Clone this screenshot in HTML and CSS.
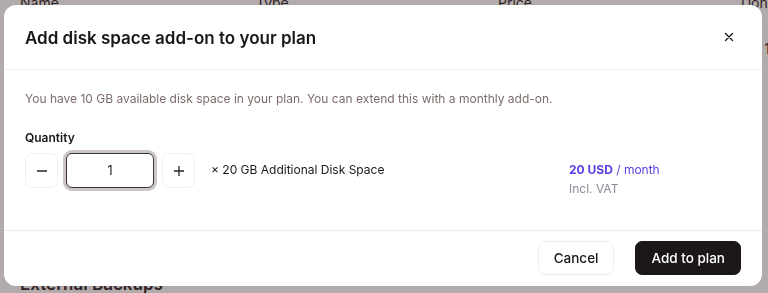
FILE: index.html
```html
<!DOCTYPE html>
<html lang="en">

<head>
    <meta charset="UTF-8">
    <meta name="viewport" content="width=device-width, initial-scale=1.0">
    <title>Disk space add-on</title>
    <link rel="stylesheet" href="styles.css">
</head>

<body>
    <div class="page">
        <div class="table-head">
            <span>Name</span>
            <span>Type</span>
            <span>Price</span>
            <span>Done</span>
        </div>
        <div class="table-row"><span class="row-num">1</span></div>
        <h3 class="section-title">External Backups</h3>
    </div>

    <div class="overlay">
        <div class="modal">
            <header class="modal-header">
                <h2>Add disk space add-on to your plan</h2>
                <button class="close" aria-label="Close">
                    <svg width="10" height="10" viewBox="0 0 10 10">
                        <path d="M1.5 1.5 L8.5 8.5 M8.5 1.5 L1.5 8.5" stroke="#1c1717" stroke-width="1.4" stroke-linecap="round" />
                    </svg>
                </button>
            </header>

            <section class="modal-body">
                <p class="intro">You have 10 GB available disk space in your plan. You can extend this with a monthly add-on.</p>
                <label class="qty-label" for="qty">Quantity</label>
                <div class="qty-row">
                    <div class="stepper">
                        <button class="step-btn" aria-label="Decrease">
                            <svg width="12" height="12" viewBox="0 0 12 12"><path d="M1 6 H11" stroke="#2a2323" stroke-width="1.3" /></svg>
                        </button>
                        <input id="qty" class="qty-input" type="text" value="1">
                        <button class="step-btn" aria-label="Increase">
                            <svg width="12" height="12" viewBox="0 0 12 12"><path d="M1 6 H11 M6 1 V11" stroke="#2a2323" stroke-width="1.3" /></svg>
                        </button>
                    </div>
                    <span class="item-name">× 20 GB Additional Disk Space</span>
                    <div class="price">
                        <div class="price-main"><strong>20 USD</strong> / month</div>
                        <div class="price-note">Incl. VAT</div>
                    </div>
                </div>
            </section>

            <footer class="modal-footer">
                <button class="btn btn-light">Cancel</button>
                <button class="btn btn-dark">Add to plan</button>
            </footer>
        </div>
    </div>
</body>

</html>
```

FILE: styles.css
```css
* {
    box-sizing: border-box;
    margin: 0;
    padding: 0;
    font-family: Inter, "Noto Sans", Arial, sans-serif;
}

body {
    background-color: #fff;
    width: 768px;
    height: 293px;
    overflow: hidden;
}

.page {
    padding: 0 20px;
    color: #3d3333;
}

.table-head {
    display: grid;
    grid-template-columns: 236px 242px 243px 1fr;
    margin-top: -6px;
    height: 36px;
    align-items: flex-start;
    font-size: 14px;
    border-bottom: 1px solid #e5dede;
}

.table-row {
    height: 40px;
    padding-top: 10px;
    text-align: right;
    font-size: 14px;
    border-bottom: 1px solid #e5dede;
}

.row-num {
    margin-right: -22px;
}

.section-title {
    margin-top: 204px;
    font-size: 17px;
    font-weight: 600;
}

.overlay {
    position: fixed;
    top: 0;
    left: 0;
    width: 100%;
    height: 100%;
    background-color: rgba(20, 0, 0, 0.33);
    display: flex;
    justify-content: flex-start;
    align-items: flex-start;
    padding: 5px 0 0 4px;
}

.modal {
    width: 758px;
    background-color: #fff;
    border-radius: 12px;
    overflow: hidden;
}

.modal-header {
    height: 65px;
    padding: 0 21px;
    display: flex;
    align-items: center;
    justify-content: space-between;
    border-bottom: 1px solid #f6eeec;
}

.modal-header h2 {
    font-size: 17px;
    font-weight: 600;
    color: #1c1717;
    padding-top: 1px;
}

.close {
    border: none;
    background: none;
    width: 16px;
    height: 16px;
    display: flex;
    align-items: center;
    justify-content: center;
    margin-right: 4px;
    cursor: pointer;
}

.modal-body {
    padding: 19px 21px 32px;
    border-bottom: 1px solid #efe9e9;
}

.intro {
    font-size: 12px;
    line-height: 20px;
    color: #7e6b6b;
}

.qty-label {
    display: block;
    margin-top: 19px;
    font-size: 12px;
    font-weight: 600;
    line-height: 20px;
    color: #1c1717;
}

.qty-row {
    display: flex;
    align-items: flex-start;
    margin-top: 5px;
}

.stepper {
    display: flex;
    align-items: center;
    gap: 8px;
}

.step-btn {
    width: 33px;
    height: 35px;
    border: 1px solid #f3eded;
    border-radius: 7px;
    background-color: #fff;
    display: flex;
    align-items: center;
    justify-content: center;
}

.qty-input {
    width: 88px;
    height: 35px;
    border: 1px solid #3b3434;
    border-radius: 6px;
    box-shadow: 0 0 0 3px #cdc4c4;
    text-align: center;
    font-size: 12.5px;
    color: #1c1717;
    outline: none;
}

.item-name {
    margin-left: 16px;
    margin-top: 7px;
    font-size: 12px;
    line-height: 20px;
    color: #1c1717;
    width: 358px;
}

.price {
    margin-top: 7px;
    font-size: 12px;
    line-height: 19px;
}

.price-main {
    color: #5a3fe6;
}

.price-main strong {
    font-weight: 700;
}

.price-note {
    color: #8b8a96;
}

.modal-footer {
    display: flex;
    justify-content: flex-end;
    gap: 21px;
    padding: 10px 21px 11px;
}

.btn {
    height: 34px;
    padding: 0 15px;
    border-radius: 7px;
    font-size: 13.5px;
    font-weight: 500;
    cursor: pointer;
}

.btn-light {
    background-color: #fff;
    border: 1px solid #f2eaea;
    color: #1c1717;
}

.btn-dark {
    background-color: #1c1717;
    border: 1px solid #1c1717;
    color: #fff;
}
```
